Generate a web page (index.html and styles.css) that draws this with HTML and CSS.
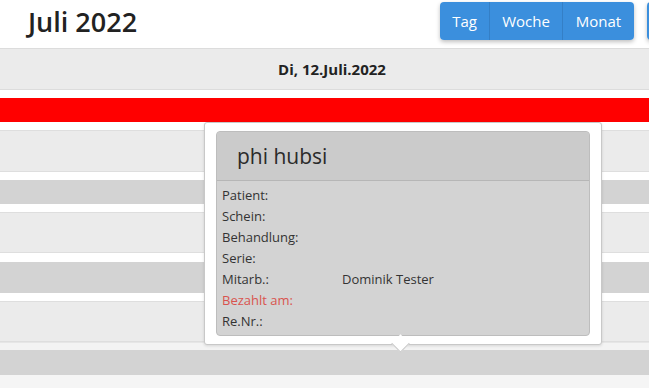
FILE: index.html
```html
<!DOCTYPE html>
<html lang="de">
<head>
    <meta charset="UTF-8">
    <meta name="viewport" content="width=device-width, initial-scale=1.0">
    <title>Kalender</title>
    <link rel="stylesheet" href="styles.css">
</head>
<body>
    <div class="calendar">
        <div class="toolbar">
            <h2 class="title">Juli 2022</h2>
            <div class="toolbar-right">
                <div class="btn-group">
                    <button type="button" class="btn">Tag</button>
                    <button type="button" class="btn">Woche</button>
                    <button type="button" class="btn">Monat</button>
                </div>
                <button type="button" class="btn btn-nav" aria-label="Zurück"></button>
            </div>
        </div>

        <div class="day-header">Di, 12.Juli.2022</div>

        <div class="allday"></div>

        <div class="slots">
            <div class="slot slot-light"></div>
            <div class="slot slot-dark"></div>
            <div class="slot slot-light short"></div>
            <div class="slot slot-dark tall"></div>
            <div class="slot slot-light short flush"></div>
            <div class="slot slot-faint flush"></div>
            <div class="slot slot-dark flush"></div>
            <div class="slot slot-faint flush"></div>
        </div>

        <div class="popover">
            <div class="event-card">
                <div class="event-title">phi hubsi</div>
                <div class="event-body">
                    <span>Patient:</span><span></span>
                    <span>Schein:</span><span></span>
                    <span>Behandlung:</span><span></span>
                    <span>Serie:</span><span></span>
                    <span>Mitarb.:</span><span>Dominik Tester</span>
                    <span class="unpaid">Bezahlt am:</span><span></span>
                    <span>Re.Nr.:</span><span></span>
                </div>
            </div>
        </div>
    </div>
</body>
</html>
```

FILE: styles.css
```css
body {
    margin: 0;
    font-family: "Open Sans", "Noto Sans", sans-serif;
    color: #333;
    background: #fff;
    overflow: hidden;
}
.calendar {
    position: relative;
    width: 664px;
}
.toolbar {
    display: flex;
    justify-content: space-between;
    align-items: flex-start;
    height: 48px;
    padding-left: 28px;
}
.title {
    margin: 0;
    padding-top: 2px;
    font-size: 27px;
    font-weight: 600;
    line-height: 40px;
    color: #222;
}
.toolbar-right {
    display: flex;
    gap: 13px;
    margin-top: 2px;
    margin-right: -36px;
}
.btn-group {
    display: flex;
    border-radius: 4px;
    overflow: hidden;
    box-shadow: 0 2px 4px rgba(0, 0, 0, 0.25);
}
.btn {
    height: 38px;
    padding: 0 13px;
    border: none;
    background-color: #3b8fdd;
    color: white;
    font-family: inherit;
    font-size: 15px;
    cursor: pointer;
}
.btn-group .btn + .btn {
    border-left: 1px solid #347fc6;
}
.btn-group .btn:first-child {
    width: 49px;
    padding: 0;
}
.btn-group .btn:nth-child(2) {
    width: 73px;
    padding: 0;
}
.btn-group .btn:last-child {
    width: 72px;
    padding: 0;
}
.btn-nav {
    width: 53px;
    border-radius: 4px;
    box-shadow: 0 2px 4px rgba(0, 0, 0, 0.25);
}
.day-header {
    height: 40px;
    line-height: 40px;
    background: #ebebeb;
    border-top: 1px solid #dcdcdc;
    border-bottom: 1px solid #dcdcdc;
    text-align: center;
    font-size: 15px;
    font-weight: bold;
    color: #222;
}
.allday {
    height: 24px;
    margin: 8px 0;
    background: #ff0000;
}
.slot {
    margin-bottom: 8px;
}
.slot-light {
    height: 40px;
    background: #ebebeb;
    border-top: 1px solid #dedede;
    border-bottom: 1px solid #dedede;
}
.slot-light.short {
    height: 39px;
    margin-bottom: 9px;
}
.slot-dark {
    height: 24px;
    background: #d3d3d3;
}
.slot-dark.tall {
    height: 31px;
}
.slot-faint {
    height: 7px;
    background: #f3f3f3;
    border-top: 1px solid #e6e6e6;
}
.slot.flush {
    margin-bottom: 0;
}
.slot-dark.flush {
    height: 25px;
}
.slots .slot-faint:last-child {
    height: 40px;
    background: #f5f5f5;
    border-top: none;
}

/* event popover */
.popover {
    position: absolute;
    left: 204px;
    top: 122px;
    width: 374px;
    padding: 8px 11px;
    background: #fff;
    border: 1px solid #c8c8c8;
    border-radius: 3px;
    box-shadow: 0 1px 3px rgba(0, 0, 0, 0.12);
}
.popover::after {
    content: "";
    position: absolute;
    left: 189px;
    bottom: -8px;
    width: 12px;
    height: 12px;
    background: #fff;
    border-right: 1px solid #c8c8c8;
    border-bottom: 1px solid #c8c8c8;
    transform: rotate(45deg);
    margin-bottom: 2px;
}
.event-card {
    background: #d3d3d3;
    border: 1px solid #bdbdbd;
    border-radius: 4px;
}
.event-title {
    height: 48px;
    line-height: 48px;
    padding-left: 20px;
    font-size: 21px;
    font-weight: 500;
    color: #2a2a2a;
    background: #cbcbcb;
    border-bottom: 1px solid #b6b6b6;
    border-radius: 4px 4px 0 0;
}
.event-body {
    display: grid;
    grid-template-columns: 120px 1fr;
    padding: 4px 5px 3px;
    font-size: 13px;
    line-height: 21px;
    color: #333;
}
.event-body .unpaid {
    color: #d9534f;
}
```
